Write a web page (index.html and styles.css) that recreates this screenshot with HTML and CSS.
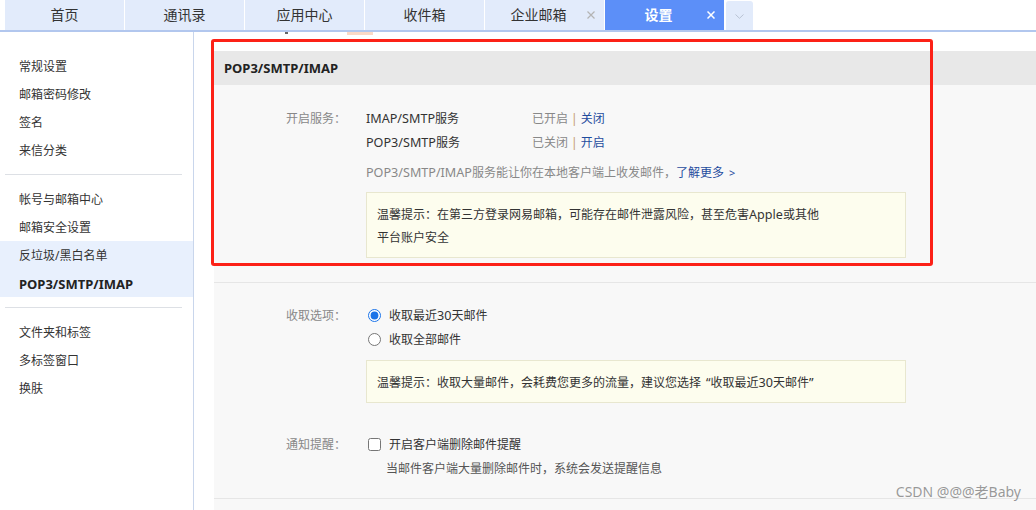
FILE: index.html
```html
<!DOCTYPE html>
<html lang="zh-CN">
<head>
<meta charset="utf-8">
<title>设置 - POP3/SMTP/IMAP</title>
<link rel="stylesheet" href="styles.css">
</head>
<body>
<div class="tabbar">
  <div class="tab"><span>首页</span></div>
  <div class="tab"><span>通讯录</span></div>
  <div class="tab"><span>应用中心</span></div>
  <div class="tab"><span>收件箱</span></div>
  <div class="tab closable"><span>企业邮箱</span><svg class="x" width="8" height="8" viewBox="0 0 8 8"><path d="M0.5 0.5L7.5 7.5M7.5 0.5L0.5 7.5" stroke="#b4b4b4" stroke-width="1.2"/></svg></div>
  <div class="tab active closable"><span>设置</span><svg class="x" width="8" height="8" viewBox="0 0 8 8"><path d="M0.5 0.5L7.5 7.5M7.5 0.5L0.5 7.5" stroke="#ffffff" stroke-width="1.5"/></svg></div>
  <div class="tab more"><svg width="9" height="5" viewBox="0 0 9 5"><path d="M0.5 0.5L4.5 4.3L8.5 0.5" fill="none" stroke="#b9c3d3" stroke-width="1"/></svg></div>
</div>
<div class="layout">
  <aside class="side">
    <ul>
      <li>常规设置</li>
      <li>邮箱密码修改</li>
      <li>签名</li>
      <li>来信分类</li>
    </ul>
    <hr>
    <ul>
      <li>帐号与邮箱中心</li>
      <li>邮箱安全设置</li>
      <li class="hl">反垃圾/黑白名单</li>
      <li class="hl cur">POP3/SMTP/IMAP</li>
    </ul>
    <hr>
    <ul>
      <li>文件夹和标签</li>
      <li>多标签窗口</li>
      <li>换肤</li>
    </ul>
  </aside>
  <main class="main">
    <div class="peek"><span class="peek-dot"></span><span class="peek-bar"></span></div>
    <section class="panel">
      <div class="panel-head">POP3/SMTP/IMAP</div>
      <div class="sect first">
        <div class="row">
          <div class="lbl ln">开启服务：</div>
          <div class="ctl">
            <div class="svc">
              <span class="ln"><span class="en">IMAP/SMTP</span>服务</span><span class="ln"><span class="muted">已开启</span><span class="sep">|</span><a href="#">关闭</a></span>
              <span class="ln"><span class="en">POP3/SMTP</span>服务</span><span class="ln"><span class="muted">已关闭</span><span class="sep">|</span><a href="#">开启</a></span>
            </div>
            <div class="desc ln"><span class="en">POP3/SMTP/IMAP</span>服务能让你在本地客户端上收发邮件，<a href="#">了解更多 <span class="gt">&gt;</span></a></div>
            <div class="tip tall">温馨提示：在第三方登录网易邮箱，可能存在邮件泄露风险，甚至危害<span class="en">Apple</span>或其他<br>平台账户安全</div>
          </div>
        </div>
      </div>
      <div class="sect second">
        <div class="row">
          <div class="lbl ln">收取选项：</div>
          <div class="ctl">
            <label class="opt"><input type="radio" name="recv" checked><span class="ln">收取最近<span class="en">30</span>天邮件</span></label>
            <label class="opt"><input type="radio" name="recv"><span class="ln">收取全部邮件</span></label>
            <div class="tip short">温馨提示：收取大量邮件，会耗费您更多的流量，建议您选择<span class="q open">“</span>收取最近<span class="en">30</span>天邮件<span class="q">”</span></div>
          </div>
        </div>
        <div class="row notify">
          <div class="lbl ln">通知提醒：</div>
          <div class="ctl">
            <label class="opt"><input type="checkbox"><span class="ln">开启客户端删除邮件提醒</span></label>
            <div class="sub ln">当邮件客户端大量删除邮件时，系统会发送提醒信息</div>
          </div>
        </div>
      </div>
    </section>
  </main>
</div>
<div class="annot"></div>
<div class="watermark">CSDN @@@老Baby</div>
</body>
</html>
```
FILE: styles.css
```css
* { box-sizing: border-box; }
html, body { margin: 0; padding: 0; }
body {
  font-family: "Noto Sans", "Noto Sans CJK SC", sans-serif;
  font-size: 12px;
  color: #333;
  background: #fff;
  position: relative;
  width: 1036px;
  height: 510px;
  overflow: hidden;
}
.en { font-size: 12.6px; }
.q { font-size: 12.6px; }
.q.open { padding-left: 5px; }

/* Tabs */
.tabbar {
  display: flex;
  gap: 1px;
  padding-left: 5px;
  height: 32px;
  border-bottom: 2px solid #b2c7ee;
}
.tab {
  width: 119px;
  height: 30px;
  background: #e2ebfb;
  display: flex;
  align-items: center;
  justify-content: center;
  font-size: 14px;
  color: #333;
  position: relative;
  padding-bottom: 2px;
}
.tab.closable { padding-right: 12px; }
.tab .x { position: absolute; right: 9px; top: 11px; }
.tab.active { background: #5c8ff8; color: #fff; font-weight: bold; }
.tab.more {
  width: 27px;
  height: 29px;
  margin-top: 1px;
  margin-left: 1px;
  border-radius: 3px 3px 0 0;
  padding-top: 2px;
  padding-bottom: 0;
}

/* Layout */
.layout { display: flex; height: 478px; }
.side {
  width: 194px;
  flex-shrink: 0;
  border-right: 1px solid #c9d6ec;
  padding-top: 20px;
}
.side ul { list-style: none; margin: 0; padding: 0; }
.side li {
  height: 28px;
  line-height: 26px;
  padding-top: 2px;
  padding-left: 19px;
  color: #333;
}
.side li.hl { background: #e8f0fd; }
.side li.cur { font-weight: bold; font-size: 13px; color: #222; }
.side hr {
  border: 0;
  border-top: 1px solid #dde0e5;
  height: 0;
  margin: 10px 11px 10px 5px;
}

.main {
  flex: 1;
  padding-left: 20px;
  display: flex;
  flex-direction: column;
}
.peek { height: 19px; display: flex; align-items: flex-start; }
.peek-dot { display: block; width: 3px; height: 2px; background: #666; margin-left: 71px; }
.peek-bar { display: block; width: 26px; height: 3px; background: #fbd9c6; margin-left: 59px; }

.panel { flex: 1; background: #f8f8f8; }
.panel-head {
  height: 34px;
  line-height: 34px;
  background: #e8e8e8;
  padding-left: 10px;
  font-weight: bold;
  font-size: 13px;
  color: #222;
}
.sect { border-bottom: 1px solid #e6e6e6; }
.sect.first { padding: 21px 0 24px; }
.sect.second { padding: 20px 0 18px; }
.row { display: flex; }
.row.notify { margin-top: 29px; }
.ln { display: block; line-height: 22px; padding-top: 2px; height: 24px; }
.lbl {
  width: 152px;
  flex-shrink: 0;
  padding-right: 20px;
  text-align: right;
  color: #888;
}
.ctl { flex: 1; }
.svc { display: grid; grid-template-columns: 166px auto; }
.muted { color: #888; }
.sep { color: #c49c66; margin: 0 3px; }
a { color: #1f4c9e; text-decoration: none; }
.gt { font-size: 11px; margin-left: 2px; }
.desc { margin-top: 6px; color: #888; }
.tip {
  width: 540px;
  background: #fdfdee;
  border: 1px solid #e8e7cf;
  padding: 10px 10px 8px;
  line-height: 23px;
  color: #333;
}
.tip.tall { margin-top: 8px; }
.tip.short { margin-top: 9px; }
.opt { display: flex; align-items: center; height: 24px; }
.opt input {
  width: 13px;
  height: 13px;
  margin: 0 8px 0 2px;
  accent-color: #1a73e8;
}
.opt span { color: #333; }
.sub { padding-left: 20px; color: #555; }

/* annotation & watermark overlays */
.annot {
  position: absolute;
  left: 211px;
  top: 39px;
  width: 722px;
  height: 227px;
  border: 3px solid #fc2117;
  border-radius: 3px;
}
.watermark {
  position: absolute;
  right: 15px;
  bottom: 8px;
  font-size: 14px;
  color: rgba(120, 120, 120, 0.75);
  line-height: 20px;
}
```
